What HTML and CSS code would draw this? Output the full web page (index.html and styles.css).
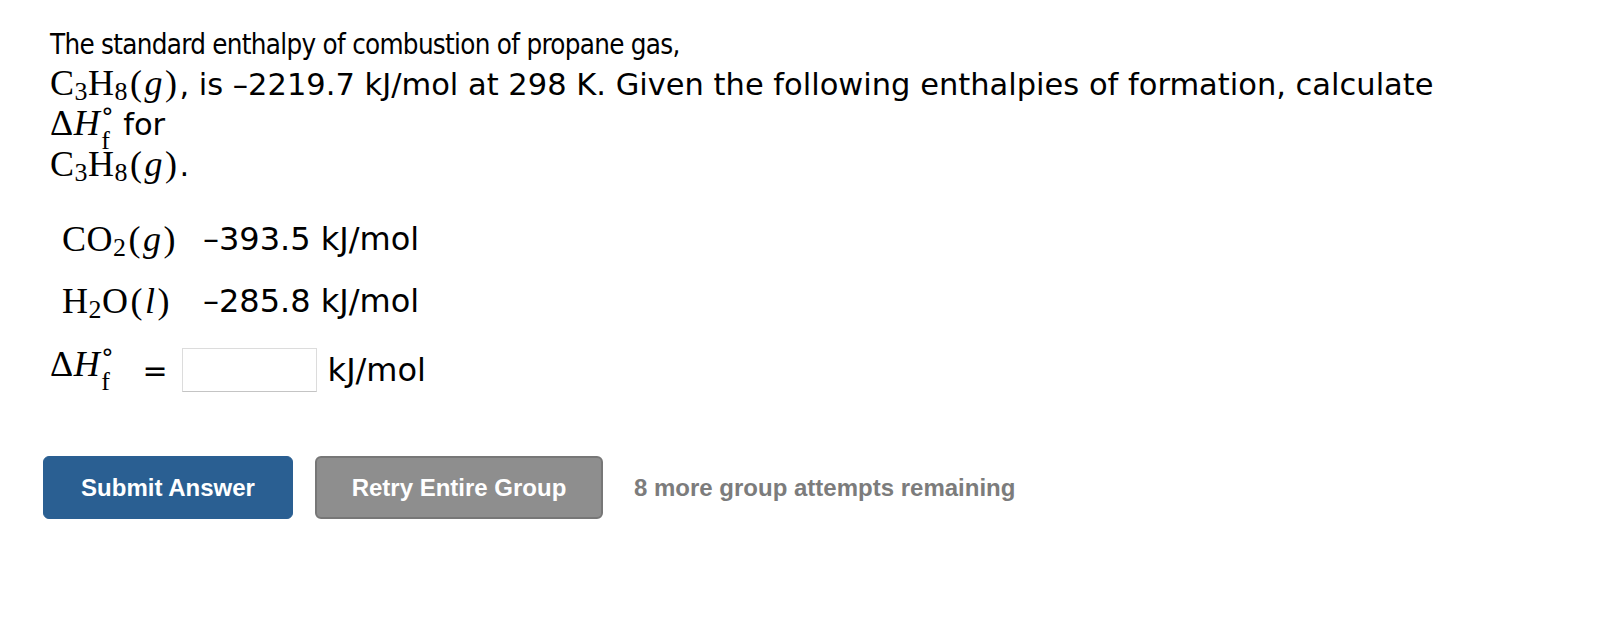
FILE: index.html
```html
<!DOCTYPE html>
<html>
<head>
<meta charset="utf-8">
<link rel="stylesheet" href="styles.css">
</head>
<body>
<div class="page">
  <div class="question">
    <div class="line first">The standard enthalpy of combustion of propane gas,</div>
    <div class="line"><span class="m">C<sub>3</sub>H<sub>8</sub><span class="paren">(</span><i>g</i><span class="paren">)</span></span>, is –2219.7 kJ/mol at 298 K. Given the following enthalpies of formation, calculate</div>
    <div class="line"><span class="m"><span class="delta">Δ</span><i>H</i><span class="ss"><span class="sup">°</span><span class="sub">f</span></span></span> for</div>
    <div class="line"><span class="m">C<sub>3</sub>H<sub>8</sub><span class="paren">(</span><i>g</i><span class="paren">)</span></span>.</div>
  </div>
  <div class="data">
    <div class="row"><span class="m cell">CO<sub>2</sub><span class="paren">(</span><i>g</i><span class="paren">)</span></span><span class="val">–393.5 kJ/mol</span></div>
    <div class="row"><span class="m cell">H<sub>2</sub>O<span class="paren">(</span><i>l</i><span class="paren">)</span></span><span class="val">–285.8 kJ/mol</span></div>
  </div>
  <div class="answer">
    <span class="m"><span class="delta">Δ</span><i>H</i><span class="ss"><span class="sup">°</span><span class="sub">f</span></span></span>
    <span class="eq">=</span>
    <input class="input" type="text">
    <span class="unit">kJ/mol</span>
  </div>
  <div class="actions">
    <button class="btn btn-submit">Submit Answer</button>
    <button class="btn btn-retry">Retry Entire Group</button>
    <span class="attempts">8 more group attempts remaining</span>
  </div>
</div>
</body>
</html>
```
FILE: styles.css
```css
html, body {
  margin: 0;
  padding: 0;
  background: #ffffff;
}
.page {
  padding: 24px 0 0 50px;
  color: #000;
}
.question {
  font-family: "DejaVu Sans", sans-serif;
  font-size: 30.5px;
}
.line {
  white-space: nowrap;
  height: 40.5px;
  line-height: 40.5px;
}
.line.first {
  font-family: "DejaVu Sans Condensed", "DejaVu Sans", sans-serif;
  font-stretch: condensed;
  font-size: 27.5px;
  letter-spacing: -0.7px;
}
.m {
  font-family: "Liberation Serif", "DejaVu Serif", serif;
  font-size: 36px;
  line-height: 1;
  letter-spacing: 0.5px;
  white-space: nowrap;
}
.m sub {
  font-size: 0.72em;
  vertical-align: -0.2em;
  line-height: 0;
}
.m i {
  font-style: italic;
}
.paren {
  padding: 0 2px;
}
.ss {
  display: inline-flex;
  flex-direction: column;
  vertical-align: 0.36em;
  font-size: 0.72em;
  line-height: 0.92em;
  margin-left: 1px;
  letter-spacing: 0;
}
.sup {
  font-family: "DejaVu Sans", sans-serif;
  font-size: 0.95em;
  line-height: 0.92em;
}
.data {
  margin-top: 22px;
  padding-left: 12px;
  font-family: "DejaVu Sans", sans-serif;
  font-size: 32px;
}
.row {
  display: flex;
  align-items: center;
  height: 62px;
}
.cell {
  width: 141px;
}
.answer {
  display: flex;
  align-items: center;
  margin-top: 16px;
  height: 44px;
  font-family: "DejaVu Sans", sans-serif;
  font-size: 32px;
}
.eq {
  font-size: 30px;
  margin-left: 29px;
  margin-right: 14px;
}
.input {
  width: 135px;
  height: 44px;
  box-sizing: border-box;
  border: 1px solid #dcdcdc;
  border-bottom-color: #c4c4c4;
  margin: 0;
  padding: 0;
}
.unit {
  margin-left: 11px;
}
.actions {
  display: flex;
  align-items: center;
  margin-top: 64px;
  margin-left: -7px;
}
.btn {
  font-family: "Liberation Sans", Arial, sans-serif;
  font-weight: bold;
  font-size: 24px;
  color: #fff;
  border-radius: 6px;
  height: 63px;
  box-sizing: border-box;
  cursor: pointer;
  padding: 0;
}
.btn-submit {
  width: 250px;
  background: #2a5f92;
  border: 1px solid #2a5f92;
}
.btn-retry {
  width: 288px;
  margin-left: 22px;
  background: #8e8e8e;
  border: 2px solid #777777;
}
.attempts {
  margin-left: 31px;
  font-family: "Liberation Sans", Arial, sans-serif;
  font-weight: bold;
  font-size: 24px;
  color: #7c7c7c;
}
```
